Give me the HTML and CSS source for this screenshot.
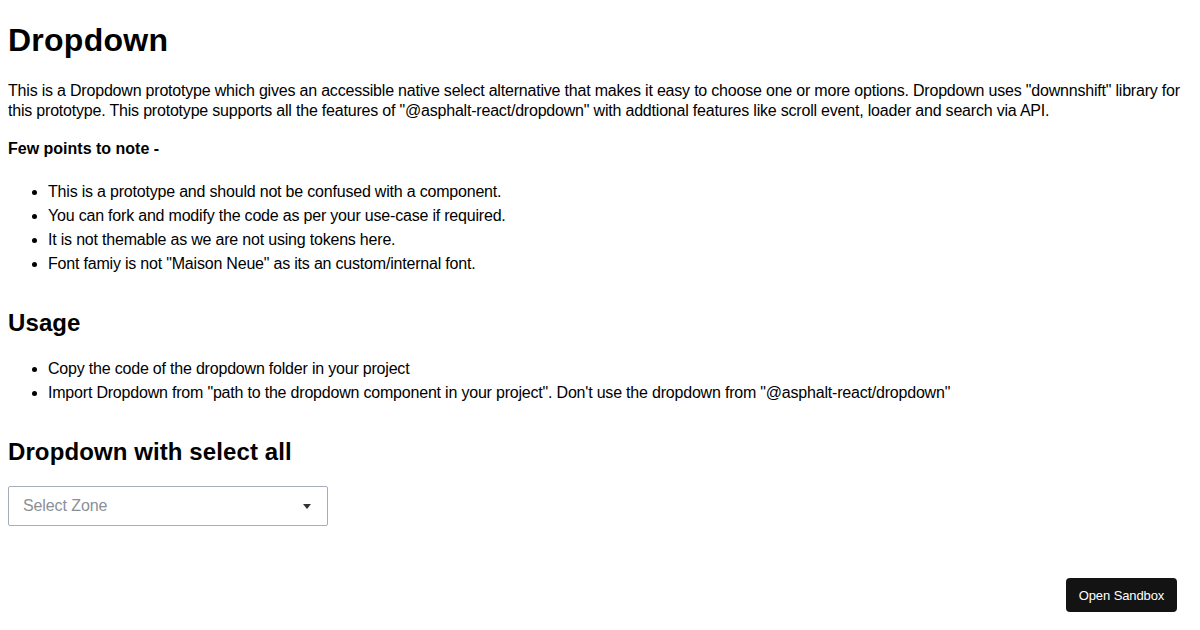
FILE: index.html
```html
<!DOCTYPE html>
<html>
<head>
<meta charset="utf-8">
<link rel="stylesheet" href="styles.css">
</head>
<body>
<h1 class="title">Dropdown</h1>
<p class="intro">This is a Dropdown prototype which gives an accessible native select alternative that makes it easy to choose one or more options. Dropdown uses "downnshift" library for this prototype. This prototype supports all the features of "@asphalt-react/dropdown" with addtional features like scroll event, loader and search via API.</p>
<p class="note"><strong>Few points to note -</strong></p>
<ul class="list">
<li>This is a prototype and should not be confused with a component.</li>
<li>You can fork and modify the code as per your use-case if required.</li>
<li>It is not themable as we are not using tokens here.</li>
<li>Font famiy is not "Maison Neue" as its an custom/internal font.</li>
</ul>
<h2 class="section">Usage</h2>
<ul class="list">
<li>Copy the code of the dropdown folder in your project</li>
<li>Import Dropdown from "path to the dropdown component in your project". Don't use the dropdown from "@asphalt-react/dropdown"</li>
</ul>
<h2 class="section">Dropdown with select all</h2>
<div class="dropdown">
<span class="placeholder">Select Zone</span>
<span class="caret"></span>
</div>
<button class="sandbox">Open Sandbox</button>
</body>
</html>
```
FILE: styles.css
```css
html, body {
  margin: 0;
}
body {
  padding: 0 8px;
  font-family: "Liberation Sans", Arial, sans-serif;
  font-size: 16px;
  color: #000;
  background: #fff;
  line-height: 20px;
  letter-spacing: -0.2px;
}
.title {
  font-size: 32px;
  line-height: 1.2;
  margin: 0 0 21.44px;
  padding-top: 21.44px;
  letter-spacing: 0.25px;
}
.intro { margin: 0 0 18px; }
.note { margin: 0 0 21px; }
.note strong { letter-spacing: 0; }
.list {
  padding-left: 40px;
  margin: 0;
}
.list li { line-height: 24px; }
.section {
  font-size: 24px;
  line-height: 1.2;
  margin: 33px 0 18.5px;
  letter-spacing: 0.1px;
}
.dropdown {
  width: 320px;
  height: 40px;
  margin-top: 20px;
  box-sizing: border-box;
  border: 1px solid #a7adb8;
  border-radius: 2px;
  display: flex;
  align-items: center;
  justify-content: space-between;
  padding: 0 16px 0 14px;
}
.placeholder {
  color: #8b8f97;
  font-size: 16px;
  letter-spacing: -0.1px;
}
.caret {
  width: 0;
  height: 0;
  border-left: 4px solid transparent;
  border-right: 4px solid transparent;
  border-top: 5px solid #333;
}
.sandbox {
  position: fixed;
  right: 23px;
  bottom: 18px;
  width: 111px;
  height: 34px;
  padding: 0;
  background: #131313;
  color: #fff;
  border: none;
  border-radius: 4px;
  font-family: "Liberation Sans", Arial, sans-serif;
  font-size: 13px;
  letter-spacing: -0.1px;
}
```
